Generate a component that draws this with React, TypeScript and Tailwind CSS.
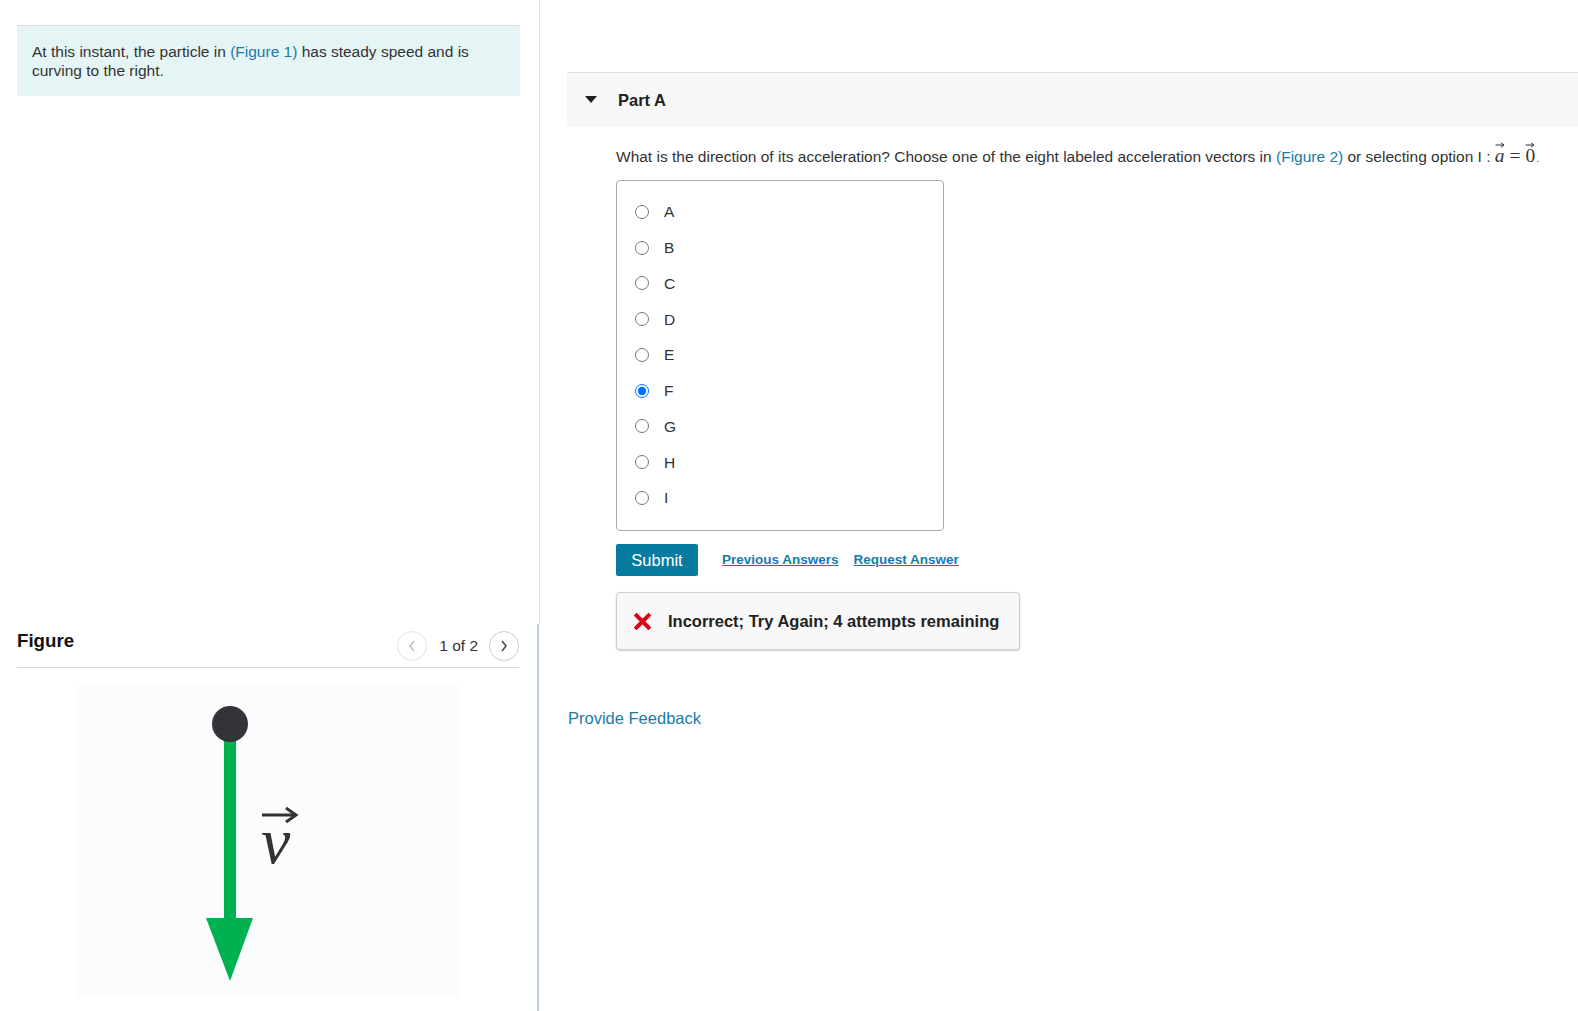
import React from "react";

const options = ["A", "B", "C", "D", "E", "F", "G", "H", "I"];

const VecLetter = ({ ch, italic }: { ch: string; italic?: boolean }) => (
  <span className="relative inline-block">
    <span
      className={`text-[19.5px] ${italic ? "italic" : ""}`}
      style={{ fontFamily: '"Liberation Serif", serif' }}
    >
      {ch}
    </span>
    <svg
      className="absolute left-1/2 -translate-x-1/2 -top-[4px]"
      width="10"
      height="6"
      viewBox="0 0 10 6"
    >
      <path d="M0.5 3 H8.5 M6 0.8 L9 3 L6 5.2" stroke="#333" strokeWidth="1" fill="none" />
    </svg>
  </span>
);

const Figure = () => (
  <svg width="383" height="313" viewBox="0 0 383 313">
    <rect x="147" y="50" width="12" height="186" fill="#00b14f" />
    <polygon points="129,233 176,233 153,296" fill="#00b14f" />
    <circle cx="153" cy="39" r="18" fill="#333438" />
    <path d="M185 130 H217" stroke="#333" strokeWidth="3" fill="none" />
    <path d="M209 123 L219 130 L209 137" stroke="#333" strokeWidth="3" fill="none" />
    <text
      x="184"
      y="178"
      fontSize="66"
      fontStyle="italic"
      fill="#333"
      fontFamily='"Liberation Serif", serif'
    >
      v
    </text>
  </svg>
);

const App = () => {
  return (
    <div
      className="w-full h-[1011px] overflow-hidden bg-white text-[#333] flex"
      style={{ fontFamily: '"Liberation Sans", Arial, sans-serif' }}
    >
      {/* left column */}
      <div className="w-[540px] shrink-0 flex flex-col">
        <div className="pl-[17px] pr-[19px] pt-[25px] border-r border-[#dfe4e8] h-[624px]">
          <div className="w-[503px] bg-[#e5f5f6] border-t border-[#d4dfe2] px-[15px] pt-[16px] pb-[16px] text-[15.5px] leading-[19px]">
            At this instant, the particle in <span className="text-[#1a7ca6]">(Figure 1)</span> has
            steady speed and is curving to the right.
          </div>
        </div>
        <div className="flex-1 mr-px border-r-2 border-[#b9cde0] pl-[17px] pr-[18px]">
          <div className="h-[44px] flex items-center justify-between border-b border-[#d5dce2]">
            <h2 className="text-[18.7px] font-bold text-[#111] mb-2">Figure</h2>
            <div className="flex items-center">
              <div className="w-[30px] h-[30px] rounded-full border border-[#e3e3e3] flex items-center justify-center">
                <svg width="10" height="14" viewBox="0 0 10 14">
                  <path d="M7 2 L3 7 L7 12" stroke="#bdbdbd" strokeWidth="1.5" fill="none" />
                </svg>
              </div>
              <span className="ml-[12px] mr-[11px] text-[15.5px]">1 of 2</span>
              <div className="w-[30px] h-[30px] rounded-full border border-[#c9c9c9] flex items-center justify-center">
                <svg width="10" height="14" viewBox="0 0 10 14">
                  <path d="M3 2 L7 7 L3 12" stroke="#444" strokeWidth="1.5" fill="none" />
                </svg>
              </div>
            </div>
          </div>
          <div className="mt-[17px] mx-auto w-[383px] h-[313px] bg-[#fbfcfd]">
            <Figure />
          </div>
        </div>
      </div>

      {/* right column */}
      <div className="flex-1 pt-[72px] pl-[27px]">
        <div className="h-[55px] bg-[#f7f7f7] border-t border-[#e2e2e2] flex items-center pl-[18px]">
          <svg width="12" height="8" viewBox="0 0 12 8">
            <polygon points="0,0 12,0 6,7" fill="#222" />
          </svg>
          <span className="ml-[21px] text-[16.5px] font-bold text-[#222]">Part A</span>
        </div>

        <div className="pl-[49px]">
          <p className="mt-[19px] text-[15.5px] leading-[19px] whitespace-nowrap">
            What is the direction of its acceleration? Choose one of the eight
            labeled acceleration vectors in{" "}
            <span className="text-[#1a7ca6]">(Figure 2)</span> or selecting
            option I : <VecLetter ch="a" italic />
            <span
              className="text-[19.5px] mx-[5px]"
              style={{ fontFamily: '"Liberation Serif", serif' }}
            >
              =
            </span>
            <VecLetter ch="0" />
            <span className="text-[11px] ml-px">.</span>
          </p>

          <div className="mt-[12px] w-[328px] h-[351px] border border-[#a9a9a9] rounded-[4px] pl-[18px] pt-[13px]">
            {options.map((o) => (
              <label key={o} className="h-[35.75px] flex items-center text-[15.5px]">
                <input
                  type="radio"
                  name="partA"
                  defaultChecked={o === "F"}
                  className="w-[14px] h-[14px] accent-[#0075ff]"
                />
                <span className="ml-[15px]">{o}</span>
              </label>
            ))}
          </div>

          <div className="mt-[13px] flex items-center">
            <button className="w-[82px] h-[32px] bg-[#077c9f] text-white text-[16.5px] rounded-[2px]">
              Submit
            </button>
            <a className="ml-[24px] text-[13.5px] font-bold text-[#1a7ca6] underline">
              Previous Answers
            </a>
            <a className="ml-[15px] text-[13.5px] font-bold text-[#1a7ca6] underline">
              Request Answer
            </a>
          </div>

          <div className="mt-[16px] w-[404px] h-[58px] bg-[#f8f8f8] border border-[#cfcfcf] rounded-[4px] shadow-[0_1px_2px_rgba(0,0,0,0.2)] flex items-center pl-[17px]">
            <svg width="17" height="17" viewBox="0 0 17 17">
              <path d="M2.5 2.5 L14.5 14.5 M14.5 2.5 L2.5 14.5" stroke="#e0001b" strokeWidth="4" strokeLinecap="square" />
            </svg>
            <span className="ml-[17px] text-[16.5px] font-bold text-[#222]">
              Incorrect; Try Again; 4 attempts remaining
            </span>
          </div>
        </div>

        <a className="block mt-[56px] ml-px text-[16.5px] text-[#1a7ca6]">Provide Feedback</a>
      </div>
    </div>
  );
};

export default App;
